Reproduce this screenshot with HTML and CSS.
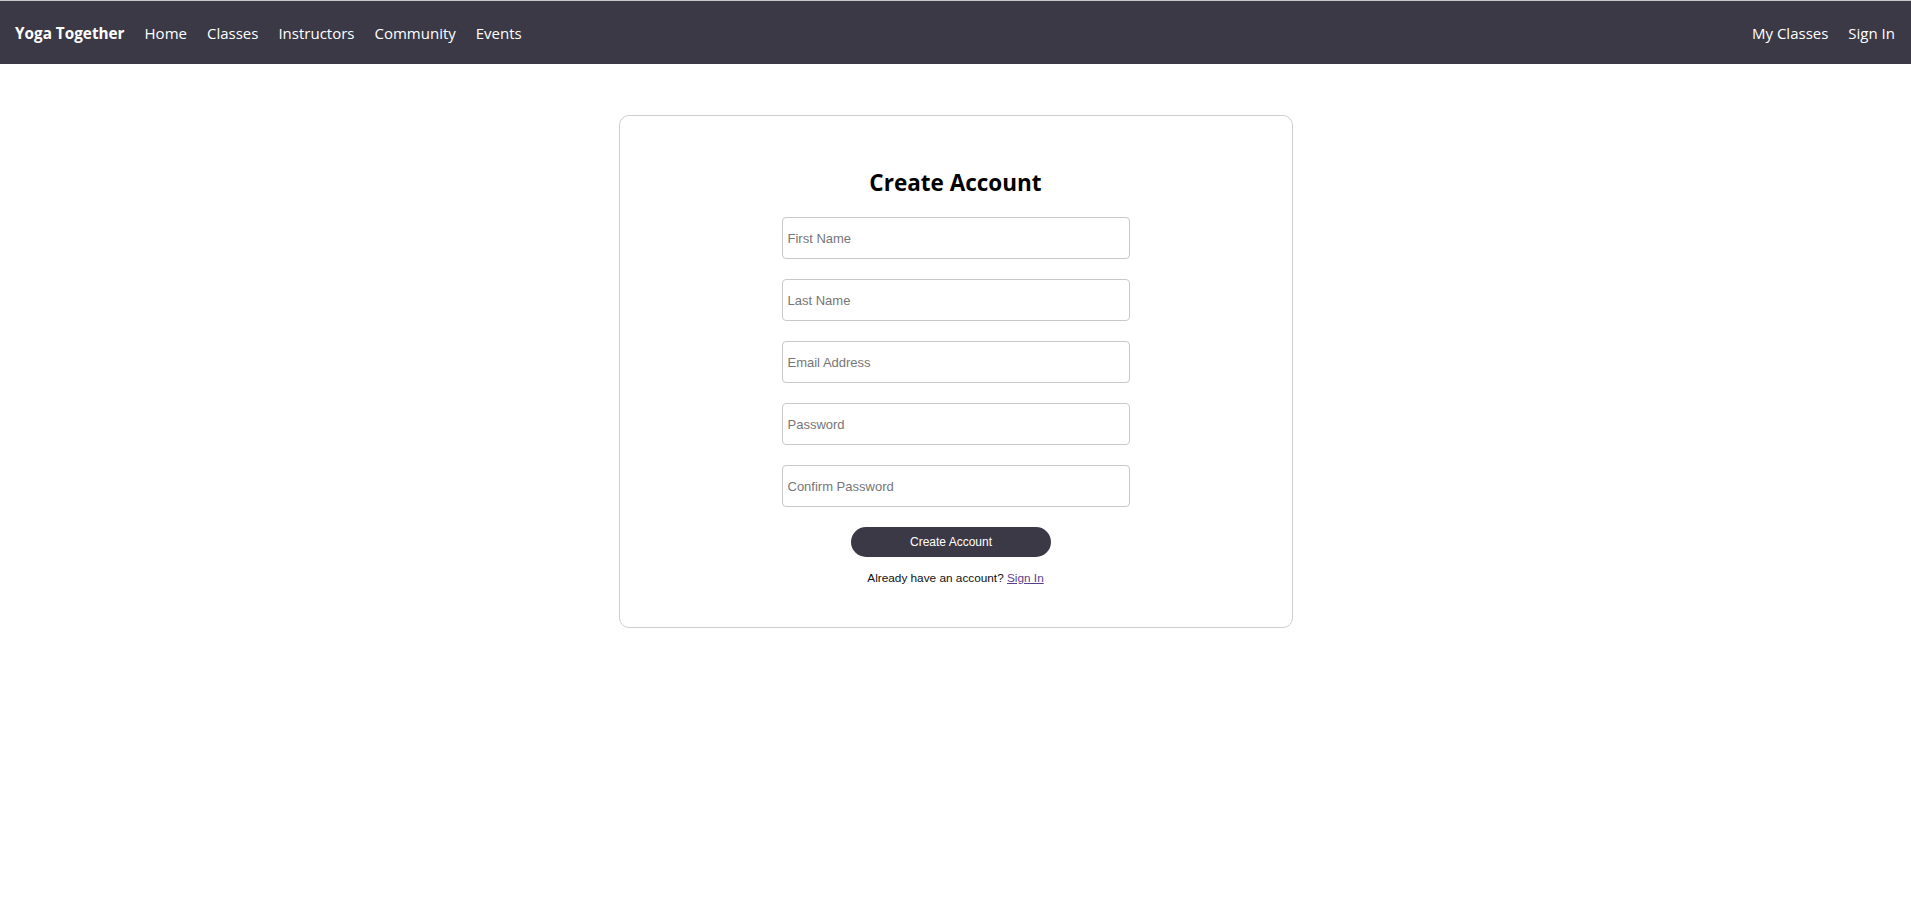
FILE: index.html
```html
<!DOCTYPE html>
<html lang="en">
<head>
<meta charset="utf-8">
<title>Yoga Together - Create Account</title>
<link rel="stylesheet" href="styles.css">
</head>
<body>
<nav class="navbar">
  <div class="nav-left">
    <a class="brand" href="#">Yoga Together</a>
    <a class="nav-link" href="#">Home</a>
    <a class="nav-link" href="#">Classes</a>
    <a class="nav-link" href="#">Instructors</a>
    <a class="nav-link" href="#">Community</a>
    <a class="nav-link" href="#">Events</a>
  </div>
  <div class="nav-right">
    <a class="nav-link" href="#">My Classes</a>
    <a class="nav-link" href="#">Sign In</a>
  </div>
</nav>
<main class="page">
  <section class="card">
    <h2 class="card-title">Create Account</h2>
    <form class="form">
      <input class="field" type="text" placeholder="First Name">
      <input class="field" type="text" placeholder="Last Name">
      <input class="field" type="email" placeholder="Email Address">
      <input class="field" type="password" placeholder="Password">
      <input class="field" type="password" placeholder="Confirm Password">
      <button class="submit" type="button">Create Account</button>
      <p class="signin-note">Already have an account? <a class="signin-link" href="#">Sign In</a></p>
    </form>
  </section>
</main>
</body>
</html>
```

FILE: styles.css
```css
html, body {
  margin: 0;
  padding: 0;
  background: #ffffff;
}

body {
  font-family: "Open Sans", "Noto Sans", sans-serif;
  color: #000;
}

.navbar {
  height: 63px;
  border-top: 1px solid #c9c9c9;
  background: #3b3946;
  display: flex;
  align-items: center;
  justify-content: space-between;
  padding: 0 6px 0 5px;
}

.nav-left,
.nav-right {
  display: flex;
  align-items: center;
}

.brand,
.nav-link {
  color: #ffffff;
  text-decoration: none;
  font-size: 15px;
  padding: 0 10px;
  line-height: 20px;
}

.brand {
  font-weight: 700;
  font-size: 15.3px;
}

.page {
  padding-top: 51px;
}

.card {
  width: 674px;
  box-sizing: border-box;
  margin: 0 auto;
  border: 1px solid #cfcfcf;
  border-radius: 10px;
  padding: 51px 0 41px;
}

.card-title {
  margin: 0 0 18px;
  text-align: center;
  font-size: 22.5px;
  line-height: 32px;
  font-weight: 700;
}

.form {
  width: 348px;
  margin: 0 auto;
  display: flex;
  flex-direction: column;
  align-items: center;
}

.field {
  width: 348px;
  height: 42px;
  box-sizing: border-box;
  margin: 0 0 20px;
  padding: 0 5px;
  border: 1px solid #c8c8c8;
  border-radius: 4px;
  font-family: "Liberation Sans", Arial, sans-serif;
  font-size: 13px;
  color: #222;
  background: #fff;
}

.field::placeholder {
  color: #767676;
}

.submit {
  width: 200px;
  height: 30px;
  margin: 0 9px 0 0;
  border: none;
  border-radius: 15px;
  background: #3b3946;
  color: #ffffff;
  font-family: "Liberation Sans", Arial, sans-serif;
  font-size: 12px;
  cursor: pointer;
}

.signin-note {
  margin: 13px 0 0;
  font-family: "Liberation Sans", Arial, sans-serif;
  font-size: 11.8px;
  line-height: 16px;
  color: #111;
  text-align: center;
}

.signin-link {
  color: #5b3f8c;
  text-decoration: underline;
}
```
